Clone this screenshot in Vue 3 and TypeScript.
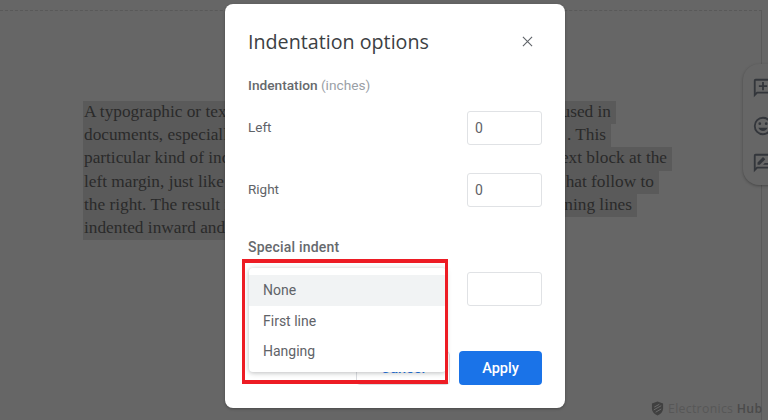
<script setup lang="ts">
interface DocLine {
  start: string
  end: string
  width: number
}

const lines: DocLine[] = [
  { start: 'A typographic or text', end: 'used in', width: 533 },
  { start: 'documents, especially', end: '. This', width: 528 },
  { start: 'particular kind of indent', end: 'ext block at the', width: 589 },
  { start: 'left margin, just like a', end: 'hat follow to', width: 576 },
  { start: 'the right. The result is', end: 'ning lines', width: 554 },
  { start: 'indented inward and', end: '', width: 300 },
]

const menuItems = ['None', 'First line', 'Hanging']
</script>

<template>
  <div class="screen">
    <main class="page">
      <div class="doc-text">
        <div v-for="line in lines" :key="line.start" class="doc-line" :style="{ width: line.width + 'px' }">
          <span>{{ line.start }}</span>
          <span>{{ line.end }}</span>
        </div>
      </div>
    </main>

    <aside class="side-tools">
      <svg class="tool" viewBox="0 0 24 24">
        <path d="M20 2H4c-1.1 0-2 .9-2 2v18l4-4h14c1.1 0 2-.9 2-2V4c0-1.1-.9-2-2-2zm0 14H5.17L4 17.17V4h16v12zM11 5.500h2V9h3.500v2H13v3.500h-2V11H7.500V9H11z" />
      </svg>
      <svg class="tool" viewBox="0 0 24 24">
        <path d="M12 2a10 10 0 1 0 0 20 10 10 0 0 0 0-20zm0 18a8 8 0 1 1 0-16 8 8 0 0 1 0 16z" />
        <circle cx="8.5" cy="9.5" r="1.5" />
        <circle cx="15.5" cy="9.5" r="1.5" />
        <path d="M12 17.5c2.3 0 4.3-1.5 5.1-3.5H6.900c.8 2 2.800 3.500 5.100 3.500z" />
      </svg>
      <svg class="tool" viewBox="0 0 24 24">
        <path d="M20 2H4c-1.100 0-2 .9-2 2v18l4-4h14c1.100 0 2-.9 2-2V4c0-1.100-.9-2-2-2zm0 14H5.170L4 17.170V4h16v12z" />
        <path d="M6 14h2.500l6-6L12 5.500l-6 6V14zM12 14h6v-2h-4l-2 2z" />
      </svg>
    </aside>

    <section class="dialog">
      <header class="dialog-head">
        <h1>Indentation options</h1>
        <svg class="close" viewBox="0 0 12 12">
          <path d="M1 1l10 10M11 1L1 11" />
        </svg>
      </header>

      <h2 class="heading first">Indentation <span>(inches)</span></h2>
      <div class="row">
        <label>Left</label>
        <input class="field" value="0" readonly />
      </div>
      <div class="row spaced">
        <label>Right</label>
        <input class="field" value="0" readonly />
      </div>

      <h2 class="heading second">Special indent</h2>
      <div class="row third">
        <span></span>
        <input class="field" readonly />
      </div>

      <footer class="actions">
        <button class="btn cancel">Cancel</button>
        <button class="btn apply">Apply</button>
      </footer>

      <ul class="menu">
        <li v-for="(item, i) in menuItems" :key="item" :class="{ active: i === 0 }">{{ item }}</li>
      </ul>
      <div class="callout"></div>
    </section>

    <div class="watermark">
      <svg viewBox="0 0 14 16">
        <path d="M7 0.500 13 2.500V8c0 3.500-2.500 6-6 7.500C3.500 14 1 11.500 1 8V2.500z" />
        <path class="cut" d="M3 9.500 11 5M3.500 6.500 9 3.500M5 12 11 8.500" />
      </svg>
      <span>Electronics <b>Hub</b></span>
    </div>
  </div>
</template>

<style scoped>
.screen {
  position: relative;
  width: 768px;
  height: 420px;
  overflow: hidden;
  background: #666666;
  font-family: Roboto, "Liberation Sans", sans-serif;
}

.page {
  box-sizing: border-box;
  width: 762px;
  height: 410px;
  margin-top: 10px;
  padding: 90px 0 0 83px;
  border-top: 1px dashed #595959;
  border-right: 1px solid #595959;
}

.doc-text {
  font-family: "Liberation Serif", serif;
  font-size: 17.300px;
  color: #2a2a2a;
}

.doc-line {
  display: flex;
  justify-content: space-between;
  box-sizing: border-box;
  height: 23.2px;
  padding: 0 5px 0 1px;
  background: #5a5a5a;
  line-height: 22px;
  white-space: nowrap;
}

.side-tools {
  position: absolute;
  top: 64px;
  left: 743px;
  display: flex;
  flex-direction: column;
  gap: 15.500px;
  box-sizing: border-box;
  width: 50px;
  height: 121px;
  padding: 13px 0 0 9px;
  background: #666666;
  border-radius: 16px;
  box-shadow: 0 1px 3px rgba(0, 0, 0, 0.3);
}

.tool {
  width: 22px;
  height: 22px;
  fill: #33363b;
  flex: none;
}

.dialog {
  position: absolute;
  top: 4px;
  left: 225px;
  box-sizing: border-box;
  width: 340px;
  height: 404px;
  padding: 24px 23px 0;
  background: #ffffff;
  border-radius: 8px;
  box-shadow: 0 1px 3px rgba(0, 0, 0, 0.3);
}

.dialog-head {
  display: flex;
  align-items: center;
  justify-content: space-between;
  height: 26px;
}

h1 {
  margin: 0;
  font-family: "Open Sans", Roboto, sans-serif;
  font-size: 19.700px;
  font-weight: 400;
  color: #3c4043;
}

.close {
  width: 11px;
  height: 11px;
  margin-right: 9px;
  fill: none;
  stroke: #5f6368;
  stroke-width: 1.200;
}

.heading {
  height: 16px;
  margin: 0;
  font-size: 13.700px;
  font-weight: 500;
  line-height: 16px;
  color: #66696d;
}

.heading span {
  font-weight: 400;
  color: #9aa0a6;
}

.first {
  margin-top: 23px;
}

.second {
  margin-top: 32px;
  font-size: 14px;
  letter-spacing: 0.200px;
}

.row {
  display: flex;
  align-items: center;
  justify-content: space-between;
  margin-top: 18px;
  font-size: 13.500px;
  color: #5f6368;
}

.row.third {
  margin-top: 17px;
}

.row label {
  margin-top: -2px;
}

.row.spaced {
  margin-top: 28px;
}

.field {
  box-sizing: border-box;
  width: 75px;
  height: 34px;
  padding: 0 7px;
  border: 1px solid #e0e2e5;
  border-radius: 3px;
  outline: none;
  font: 14px Roboto, sans-serif;
  color: #5f6368;
}

.actions {
  display: flex;
  justify-content: flex-end;
  gap: 9px;
  margin-top: 45px;
}

.btn {
  height: 34px;
  border-radius: 4px;
  font: 500 14.500px Roboto, sans-serif;
}

.cancel {
  width: 94px;
  background: #ffffff;
  border: 1px solid #dadce0;
  color: #1a73e8;
}

.apply {
  width: 83px;
  background: #1a73e8;
  border: 0;
  color: #ffffff;
}

.menu {
  position: absolute;
  top: 264px;
  left: 24px;
  box-sizing: border-box;
  width: 197px;
  height: 104px;
  margin: 0;
  padding: 7px 0 0;
  list-style: none;
  background: #ffffff;
  border-radius: 4px;
  box-shadow: 0 1px 5px rgba(60, 64, 67, 0.35);
  font-size: 14px;
  color: #5f6368;
}

.menu li {
  height: 30.500px;
  padding-left: 14px;
  line-height: 31px;
}

.menu .active {
  background: #f1f3f4;
}

.callout {
  position: absolute;
  top: 255px;
  left: 17px;
  box-sizing: border-box;
  width: 206px;
  height: 125px;
  border: 4px solid #ed1c24;
  border-left-width: 3px;
  border-right-width: 3px;
}

.watermark {
  position: absolute;
  top: 400px;
  left: 651px;
  display: flex;
  align-items: center;
  gap: 4px;
  font-family: "Open Sans", sans-serif;
  font-size: 12.300px;
  letter-spacing: 0.300px;
  color: #575757;
}

.watermark svg {
  width: 13px;
  height: 15px;
  fill: #404040;
}

.watermark .cut {
  fill: none;
  stroke: #6e6e6e;
  stroke-width: 1;
}

.watermark b {
  color: #4a4a4a;
  font-weight: 600;
}
</style>
